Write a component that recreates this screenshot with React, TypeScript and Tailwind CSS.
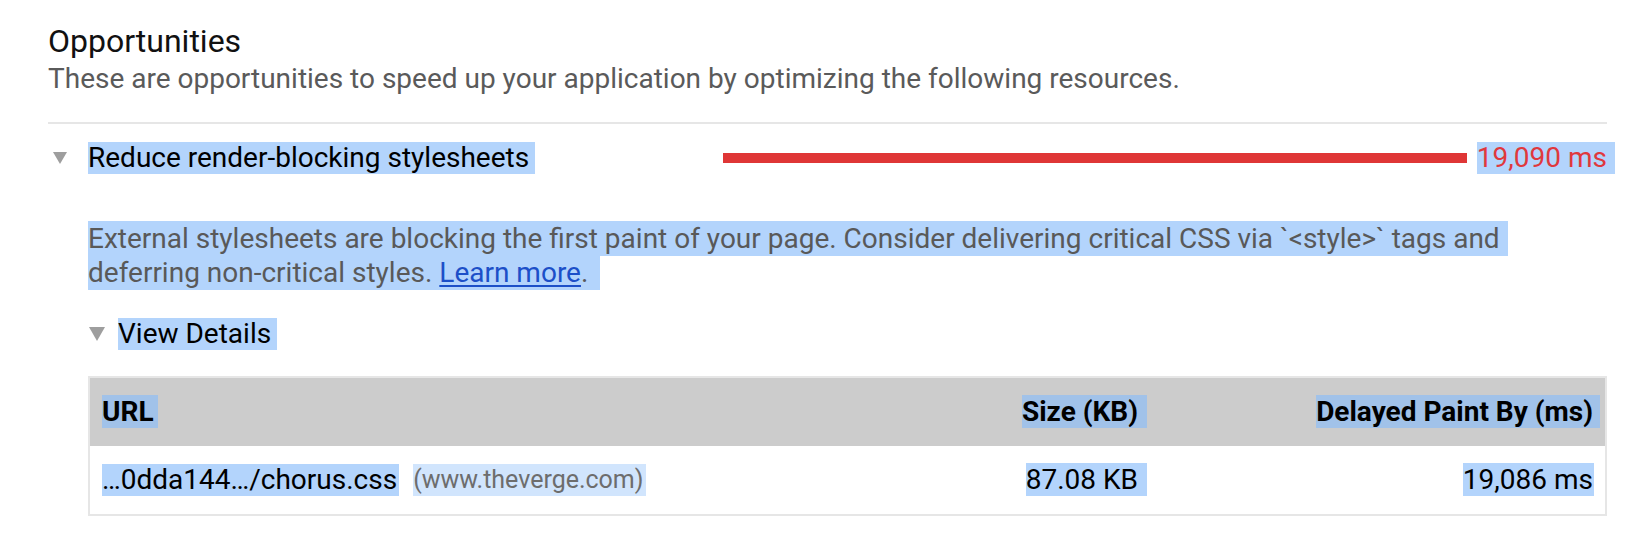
import React from "react";

const sel = "bg-[#b3d4fc]";

function Caret({ w, h }: { w: number; h: number }) {
  return (
    <svg width={w} height={h} viewBox={`0 0 ${w} ${h}`} className="block">
      <polygon points={`0,0 ${w},0 ${w / 2},${h}`} fill="#9e9e9e" />
    </svg>
  );
}

export default function App() {
  return (
    <div className="w-[1648px] min-h-[534px] bg-white pt-[22px] pl-[48px] font-['Roboto','Liberation_Sans',sans-serif] antialiased">
      <div className="w-[1559px]">
        <h2 className="text-[32px] leading-[38px] text-[#111]">Opportunities</h2>
        <p className="mt-[2px] text-[28px] leading-[34px] text-[#5a5a5a]">
          These are opportunities to speed up your application by optimizing the following resources.
        </p>

        <div className="mt-[26px] h-[2px] bg-[#e6e6e6]" />

        {/* audit row */}
        <div className="mt-[18px] flex h-[32px] items-center text-[28px] leading-[32px]">
          <div className="w-[40px] pl-[5px]">
            <Caret w={14} h={12} />
          </div>
          <span className={`${sel} pr-[6px] text-black`}>Reduce render-blocking stylesheets</span>
          <div className="ml-auto h-[10px] w-[744px] bg-[#df3636]" />
          <span className={`${sel} ml-[10px] -mr-[8px] pr-[8px] text-[#e0383d]`}>19,090 ms</span>
        </div>

        <p className="mt-[47.5px] pl-[40px] text-[28px] leading-[34px] text-[#595959] whitespace-nowrap">
          <span className={`${sel} py-[1px] pr-[8px]`}>
            External stylesheets are blocking the first paint of your page. Consider delivering critical CSS via `&lt;style&gt;` tags and
          </span>
          <br />
          <span className={`${sel} py-[1px] pr-[12px]`}>
            deferring non-critical styles.{" "}
            <a href="#" className="text-[#1c4fc8] underline underline-offset-[3px]">
              Learn more
            </a>
            .
          </span>
        </p>

        <div className="mt-[28px] flex h-[32px] items-center pl-[41px] text-[28px] leading-[32px]">
          <Caret w={16} h={14} />
          <span className={`${sel} ml-[13px] pr-[6px] text-black`}>View Details</span>
        </div>

        {/* details table */}
        <div className="mt-[26.5px] ml-[40px] w-[1519px] border-2 border-[#e6e6e6] text-[28px] leading-[32px]">
          <div className="flex h-[68px] items-center bg-[#cccccc] font-bold text-black">
            <div className="flex-1 pl-[12px]">
              <span className="bg-[#a1c2e9] pr-[4px]">URL</span>
            </div>
            <div className="w-[300px] pr-[12px] text-right">
              <span className="bg-[#a1c2e9] -mr-[9px] pr-[9px]">Size (KB)</span>
            </div>
            <div className="w-[455px] pr-[12px] text-right">
              <span className="bg-[#a1c2e9] -mr-[7px] pr-[7px]">Delayed Paint By (ms)</span>
            </div>
          </div>
          <div className="flex h-[68px] items-center text-black">
            <div className="flex flex-1 items-center pl-[12px] whitespace-nowrap">
              <span className={`${sel} pr-[2px]`}>…0dda144…/chorus.css</span>
              <span className="ml-[14px] bg-[#d1e5fd] pr-[2px] text-[25px] text-[#6d6d6d]">(www.theverge.com)</span>
            </div>
            <div className="w-[300px] pr-[12px] text-right">
              <span className={`${sel} -mr-[9px] pr-[9px]`}>87.08 KB</span>
            </div>
            <div className="w-[455px] pr-[12px] text-right">
              <span className={`${sel} -mr-[1px] pr-[1px]`}>19,086 ms</span>
            </div>
          </div>
        </div>
      </div>
    </div>
  );
}
